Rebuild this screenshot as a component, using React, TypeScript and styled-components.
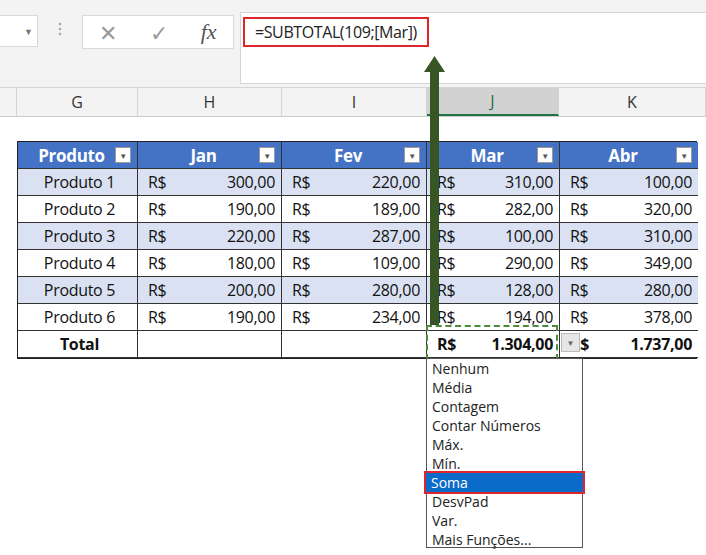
import React from "react";
import styled, { createGlobalStyle } from "styled-components";

const G = createGlobalStyle`
  body { margin: 0; font-family: "Open Sans", "Noto Sans", sans-serif; background: #fff; }
`;
const Page = styled.div`position: relative; width: 706px; height: 555px; overflow: hidden; background: #fff;`;
const Top = styled.div`height: 88px; background: #f3f3f3; display: flex; align-items: flex-start; padding-top: 12px; box-sizing: border-box; border-bottom: 1px solid #d4d4d4;`;
const NameBox = styled.div`width: 38px; height: 32px; margin-top: 3px; background: #fff; border: 1px solid #d9d9d9; border-left: none; display: flex; align-items: center; justify-content: flex-end; padding-right: 4px; box-sizing: border-box; color: #777; font-size: 9px;`;
const Dots = styled.div`width: 44px; display: flex; justify-content: center; margin-top: 10px;`;
const Fx = styled.div`width: 150px; height: 32px; margin-top: 3px; background: #fff; border: 1px solid #d9d9d9; display: flex; align-items: center; justify-content: space-around; color: #999; font-size: 22px;`;
const Formula = styled.div`margin-left: 6px; flex: 1; height: 62px; background: #fff; border: 1px solid #d4d4d4; border-right: none; padding: 4px 2px;`;
const FText = styled.span`display: inline-block; border: 2px solid #e0262c; padding: 2px 10px 2px 10px; font-size: 16px; color: #222; font-family: "Open Sans", sans-serif; letter-spacing: -0.4px;`;
const FxText = styled.i`font-family: "Liberation Serif", serif; color: #555;`;
const ColHdr = styled.div`display: grid; grid-template-columns: 17px 121px 144px 145px 132px 147px; height: 28px; background: #f3f3f3; border-bottom: 1px solid #ccc;`;
const CH = styled.div<{ $sel?: boolean }>`display: flex; align-items: center; justify-content: center; font-size: 16px; color: #333; border-right: 1px solid #d4d4d4;
  background: ${p => (p.$sel ? "#d2d2d2" : "transparent")}; ${p => p.$sel && "border-bottom: 2px solid #217346; color:#217346;"}`;
const Table = styled.div`margin: 24px 0 0 17px; width: 680px; display: grid; grid-template-columns: 120px 144px 145px 133px 138px; border: 1px solid #222; box-sizing: border-box;`;
const Cell = styled.div<{ $hdr?: boolean; $band?: boolean; $bold?: boolean }>`height: 27px; box-sizing: border-box; border-right: 1px solid #333; border-bottom: 1px solid #333; display: flex; align-items: center; font-size: ${p => (p.$hdr ? 17 : 16)}px; padding: 0 6px 0 10px; letter-spacing: -0.3px;
  background: ${p => (p.$hdr ? "#4472c4" : p.$band ? "#d9e1f2" : "#fff")}; color: ${p => (p.$hdr ? "#fff" : "#111")}; font-weight: ${p => (p.$hdr || p.$bold ? 700 : 400)};
  &:nth-child(5n) { border-right: none; }`;
const Grow = styled.span`flex: 1; text-align: center;`;
const Amt = styled.span`flex: 1; text-align: right;`;
const Filt = styled.span`width: 16px; height: 16px; background: #fff; border: 1px solid #999; display: inline-flex; align-items: center; justify-content: center; color: #555; font-size: 8px; box-sizing: border-box;`;
const Marquee = styled.div`position: absolute; left: 426px; top: 325px; width: 132px; height: 35px; border: 2px dashed #4a8a3a; box-sizing: border-box;`;
const DropBtn = styled.div`position: absolute; left: 561px; top: 333px; width: 19px; height: 19px; background: #e6e6e6; border: 1px solid #bbb; box-sizing: border-box; font-size: 8px; color: #666; text-align: center; line-height: 17px;`;
const Overlay = styled.svg`position: absolute; left: 0; top: 0;`;
const Menu = styled.div`position: absolute; left: 426px; top: 358px; width: 157px; height: 190px; border: 1px solid #555; background: #fff; box-sizing: border-box;`;
const Item = styled.div<{ $sel?: boolean }>`height: 19px; line-height: 19px; font-size: 14px; padding-left: 5px; color: ${p => (p.$sel ? "#fff" : "#222")}; background: ${p => (p.$sel ? "#0b6bc8" : "transparent")}; ${p => p.$sel && "outline: 2px solid #e0262c; margin: 0 -1px; position: relative;"}`;

const data = [
  ["300,00", "220,00", "310,00", "100,00"],
  ["190,00", "189,00", "282,00", "320,00"],
  ["220,00", "287,00", "100,00", "310,00"],
  ["180,00", "109,00", "290,00", "349,00"],
  ["200,00", "280,00", "128,00", "280,00"],
  ["190,00", "234,00", "194,00", "378,00"],
];

export default function App() {
  return (
    <Page>
      <G />
      <Top>
        <NameBox>▼</NameBox>
        <Dots>
          <svg width="4" height="14"><circle cx="2" cy="2" r="1.3" fill="#aaa" /><circle cx="2" cy="7" r="1.3" fill="#aaa" /><circle cx="2" cy="12" r="1.3" fill="#aaa" /></svg>
        </Dots>
        <Fx><span>✕</span><span>✓</span><FxText>fx</FxText></Fx>
        <Formula><FText>=SUBTOTAL(109;[Mar])</FText></Formula>
      </Top>
      <ColHdr>
        <CH /><CH>G</CH><CH>H</CH><CH>I</CH><CH $sel>J</CH><CH>K</CH>
      </ColHdr>
      <Table>
        {["Produto", "Jan", "Fev", "Mar", "Abr"].map(h => (
          <Cell $hdr key={h}><Grow>{h}</Grow><Filt>▼</Filt></Cell>
        ))}
        {data.map((r, i) => (
          <React.Fragment key={i}>
            <Cell $band={i % 2 === 0}><Grow>Produto {i + 1}</Grow></Cell>
            {r.map((v, j) => (
              <Cell $band={i % 2 === 0} key={j}><span>R$</span><Amt>{v}</Amt></Cell>
            ))}
          </React.Fragment>
        ))}
        <Cell $bold><Grow>Total</Grow></Cell>
        <Cell />
        <Cell />
        <Cell $bold><span>R$</span><Amt>1.304,00</Amt></Cell>
        <Cell $bold><span>R$</span><Amt>1.737,00</Amt></Cell>
      </Table>
      <Marquee />
      <DropBtn>▼</DropBtn>
      <Overlay width="706" height="555">
        <rect x="430" y="70" width="9" height="255" fill="#375623" />
        <polygon points="424,72 445,72 434.5,56" fill="#375623" />
        <rect x="568" y="360" width="8" height="95" fill="#e8141a" />
        <polygon points="561,452 583,452 572,466" fill="#e8141a" />
      </Overlay>
      <Menu>
        {["Nenhum", "Média", "Contagem", "Contar Números", "Máx.", "Mín.", "Soma", "DesvPad", "Var.", "Mais Funções..."].map(t => (
          <Item key={t} $sel={t === "Soma"}>{t}</Item>
        ))}
      </Menu>
    </Page>
  );
}
